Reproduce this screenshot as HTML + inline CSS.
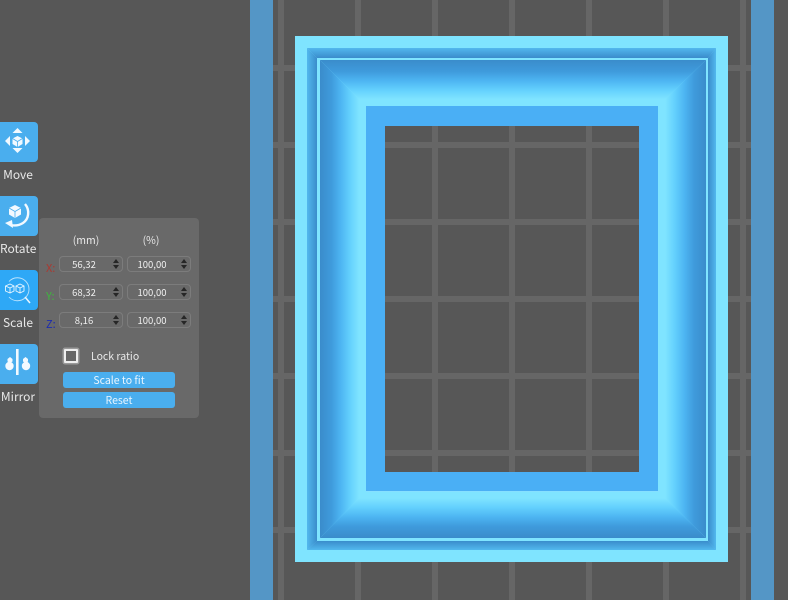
<!DOCTYPE html>
<html><head><meta charset="utf-8">
<style>
html,body{margin:0;padding:0;width:788px;height:600px;overflow:hidden;background:#575757}
body{position:relative;font-family:"Noto Sans CJK SC","Liberation Sans",sans-serif;color:#f0f0f0}
svg.bg{position:absolute;left:0;top:0}
.b{position:absolute;left:0;width:38px;height:40px;background:#4aaeee;border-radius:0 4px 4px 0}
.b svg{position:absolute;left:0;top:0}
.l{position:absolute;left:0;width:36px;text-align:center;font-size:12px;line-height:16px;color:#e8e8e8}
.p{position:absolute;left:39px;top:218px;width:160px;height:200px;background:#696969;border-radius:4px}
.t{position:absolute;font-size:10.5px;line-height:14px;color:#e8e8e8;text-align:center}
.f{position:absolute;width:62px;height:14px;border:1px solid #7c7c7c;border-radius:4px;box-sizing:content-box;font-size:9.5px;line-height:15px;color:#eee}
.f span{position:absolute;left:0;right:14px;text-align:center;top:0}
.f i{position:absolute;right:3px;width:0;height:0;border-left:3px solid transparent;border-right:3px solid transparent}
.f i.u{top:2px;border-bottom:4px solid #262626}
.f i.d{top:8px;border-top:4px solid #262626}
.ax{position:absolute;font-size:11px;line-height:12px;left:7px}
.btn{position:absolute;left:24px;width:112px;height:16px;background:#4aaeee;border-radius:3px;text-align:center;font-size:10.5px;line-height:17px;color:#eaf6ff}
.cb{position:absolute;left:25px;top:131px;width:10px;height:10px;border:2px solid #eee;background:#666;box-shadow:0 0 0 1.500px #9a9a9a;border-radius:1px}
</style></head><body>
<svg class="bg" width="788" height="600" viewBox="0 0 788 600" xmlns="http://www.w3.org/2000/svg">
<defs>
<linearGradient id="gt" gradientUnits="userSpaceOnUse" x1="0" y1="60" x2="0" y2="106"><stop offset="0" stop-color="#3a8ccb"/><stop offset=".25" stop-color="#3f9bdc"/><stop offset=".45" stop-color="#4db5f2"/><stop offset=".65" stop-color="#63d0fd"/><stop offset=".85" stop-color="#7fe4ff"/><stop offset="1" stop-color="#7fe4ff"/></linearGradient>
<linearGradient id="gb" gradientUnits="userSpaceOnUse" x1="0" y1="538" x2="0" y2="491"><stop offset="0" stop-color="#3a8ccb"/><stop offset=".25" stop-color="#3f9bdc"/><stop offset=".45" stop-color="#4db5f2"/><stop offset=".65" stop-color="#63d0fd"/><stop offset=".85" stop-color="#7fe4ff"/><stop offset="1" stop-color="#7fe4ff"/></linearGradient>
<linearGradient id="gl" gradientUnits="userSpaceOnUse" x1="320" y1="0" x2="366" y2="0"><stop offset="0" stop-color="#3a8ccb"/><stop offset=".25" stop-color="#3f9bdc"/><stop offset=".45" stop-color="#4db5f2"/><stop offset=".65" stop-color="#63d0fd"/><stop offset=".85" stop-color="#7fe4ff"/><stop offset="1" stop-color="#7fe4ff"/></linearGradient>
<linearGradient id="gr" gradientUnits="userSpaceOnUse" x1="706" y1="0" x2="658" y2="0"><stop offset="0" stop-color="#3a8ccb"/><stop offset=".25" stop-color="#3f9bdc"/><stop offset=".45" stop-color="#4db5f2"/><stop offset=".65" stop-color="#63d0fd"/><stop offset=".85" stop-color="#7fe4ff"/><stop offset="1" stop-color="#7fe4ff"/></linearGradient>
<linearGradient id="o1" gradientUnits="userSpaceOnUse" x1="0" y1="48" x2="0" y2="58"><stop offset="0" stop-color="#52b8ee"/><stop offset="1" stop-color="#3a8ccb"/></linearGradient>
<linearGradient id="o2" gradientUnits="userSpaceOnUse" x1="0" y1="550" x2="0" y2="541"><stop offset="0" stop-color="#52b8ee"/><stop offset="1" stop-color="#3a8ccb"/></linearGradient>
<linearGradient id="o3" gradientUnits="userSpaceOnUse" x1="307" y1="0" x2="317" y2="0"><stop offset="0" stop-color="#52b8ee"/><stop offset="1" stop-color="#3a8ccb"/></linearGradient>
<linearGradient id="o4" gradientUnits="userSpaceOnUse" x1="716" y1="0" x2="708" y2="0"><stop offset="0" stop-color="#52b8ee"/><stop offset="1" stop-color="#3a8ccb"/></linearGradient>
</defs>
<rect width="788" height="600" fill="#575757"/>
<g fill="#666666">
<rect x="278" y="0" width="6" height="600"/><rect x="355" y="0" width="6" height="600"/><rect x="432" y="0" width="6" height="600"/><rect x="509" y="0" width="6" height="600"/><rect x="586" y="0" width="6" height="600"/><rect x="663" y="0" width="6" height="600"/><rect x="740" y="0" width="6" height="600"/>
<rect x="273" y="65" width="478" height="6"/><rect x="273" y="142" width="478" height="6"/><rect x="273" y="219" width="478" height="6"/><rect x="273" y="296" width="478" height="6"/><rect x="273" y="373" width="478" height="6"/><rect x="273" y="450" width="478" height="6"/><rect x="273" y="527" width="478" height="6"/>
</g>
<rect x="250" y="0" width="23" height="600" fill="#5496c6"/>
<rect x="751" y="0" width="23" height="600" fill="#5496c6"/>
<!-- frame -->
<rect x="295" y="36" width="433" height="526" fill="#7fe4ff"/>
<polygon points="307,48 716,48 708,58 317,58" fill="url(#o1)"/>
<polygon points="307,550 716,550 708,541 317,541" fill="url(#o2)"/>
<polygon points="307,48 317,58 317,541 307,550" fill="url(#o3)"/>
<polygon points="716,48 708,58 708,541 716,550" fill="url(#o4)"/>
<rect x="317" y="58" width="391" height="483" fill="#7fe4ff"/>
<polygon points="320,60 706,60 658,106 366,106" fill="url(#gt)"/>
<polygon points="320,538 706,538 658,491 366,491" fill="url(#gb)"/>
<polygon points="320,60 366,106 366,491 320,538" fill="url(#gl)"/>
<polygon points="706,60 658,106 658,491 706,538" fill="url(#gr)"/>
<rect x="366" y="106" width="292" height="385" fill="#4aaff5"/>
<rect x="366" y="491" width="294" height="1" fill="#86e0ff"/>
<rect x="385" y="126" width="254" height="346" fill="#575757"/>
<g fill="#666666">
<rect x="432" y="126" width="6" height="346"/><rect x="509" y="126" width="6" height="346"/><rect x="586" y="126" width="6" height="346"/>
<rect x="385" y="142" width="254" height="6"/><rect x="385" y="219" width="254" height="6"/><rect x="385" y="296" width="254" height="6"/><rect x="385" y="373" width="254" height="6"/><rect x="385" y="450" width="254" height="6"/>
</g>
</svg>

<div class="b" style="top:122px"><svg width="38" height="40" viewBox="0 0 38 40" fill="#f2f9ff">
<path d="M17.500 6l5 5h-10z"/><path d="M17.500 31l5-5h-10z"/><path d="M5 19l5-5v10z"/><path d="M30 19l-5-5v10z"/>
<path d="M17.500 14l5 2.500v5.500l-5 3-5-3v-5.500z"/><path d="M17.500 19.500v5.500M12.500 16.500l5 3 5-3" stroke="#4aaeee" stroke-width=".8" fill="none"/></svg></div>
<div class="l" style="top:167px">Move</div>

<div class="b" style="top:196px"><svg width="38" height="40" viewBox="0 0 38 40">
<path d="M15 9l6 3v6.500l-6 3.500-6-3.500v-6.500z" fill="#f2f9ff"/><path d="M15 15.500v6M9 12l6 3.500 6-3.500" stroke="#4aaeee" stroke-width=".8" fill="none"/>
<path d="M25 8c5 6 4 15-2 19-4 2.500-8 3-12 2" stroke="#f2f9ff" stroke-width="2.400" fill="none"/><path d="M5 27l7-3 1 8z" fill="#f2f9ff"/></svg></div>
<div class="l" style="top:241px">Rotate</div>

<div class="b" style="top:270px;background:#2ea8f6"><svg width="38" height="40" viewBox="0 0 38 40" fill="none" stroke="#eaf6ff" stroke-width=".9">
<path d="M9 11.500a11.500 11.500 0 1 1 0 15.500" opacity=".75"/><path d="M25 27l5 6" stroke-width="1.500"/>
<path d="M5.500 16l4.500-2 4 2v5l-4 2-4.500-2zM5.500 16l4.500 2 4-2M10 18v5"/>
<path d="M16 16l4-2 4 2v5l-4 2-4-2zM16 16l4 2 4-2M20 18v5"/></svg></div>
<div class="l" style="top:315px">Scale</div>

<div class="b" style="top:344px"><svg width="38" height="40" viewBox="0 0 38 40" fill="#f2f9ff">
<rect x="16" y="5" width="2.600" height="26"/><circle cx="9.500" cy="22" r="4.200"/><circle cx="26" cy="22" r="4.200"/>
<path d="M10 13l2.500 2v2.500l-2.500 1.500-2.500-1.500v-2.500z"/><path d="M25.500 13l2.500 2v2.500l-2.500 1.500-2.500-1.500v-2.500z"/></svg></div>
<div class="l" style="top:389px">Mirror</div>

<div class="p">
<div class="t" style="left:30px;width:34px;top:16px">(mm)</div>
<div class="t" style="left:95px;width:34px;top:16px">(%)</div>
<div class="ax" style="top:44px;color:#a93a32">X:</div>
<div class="ax" style="top:72px;color:#3fb53f">Y:</div>
<div class="ax" style="top:100px;color:#1c2cb0">Z:</div>
<div class="f" style="left:20px;top:38px"><span>56,32</span><i class="u"></i><i class="d"></i></div>
<div class="f" style="left:88px;top:38px"><span>100,00</span><i class="u"></i><i class="d"></i></div>
<div class="f" style="left:20px;top:66px"><span>68,32</span><i class="u"></i><i class="d"></i></div>
<div class="f" style="left:88px;top:66px"><span>100,00</span><i class="u"></i><i class="d"></i></div>
<div class="f" style="left:20px;top:94px"><span>8,16</span><i class="u"></i><i class="d"></i></div>
<div class="f" style="left:88px;top:94px"><span>100,00</span><i class="u"></i><i class="d"></i></div>
<div class="cb"></div>
<div class="t" style="left:52px;top:132px;font-size:10.5px;text-align:left">Lock ratio</div>
<div class="btn" style="top:154px">Scale to fit</div>
<div class="btn" style="top:174px">Reset</div>
</div>
</body></html>
